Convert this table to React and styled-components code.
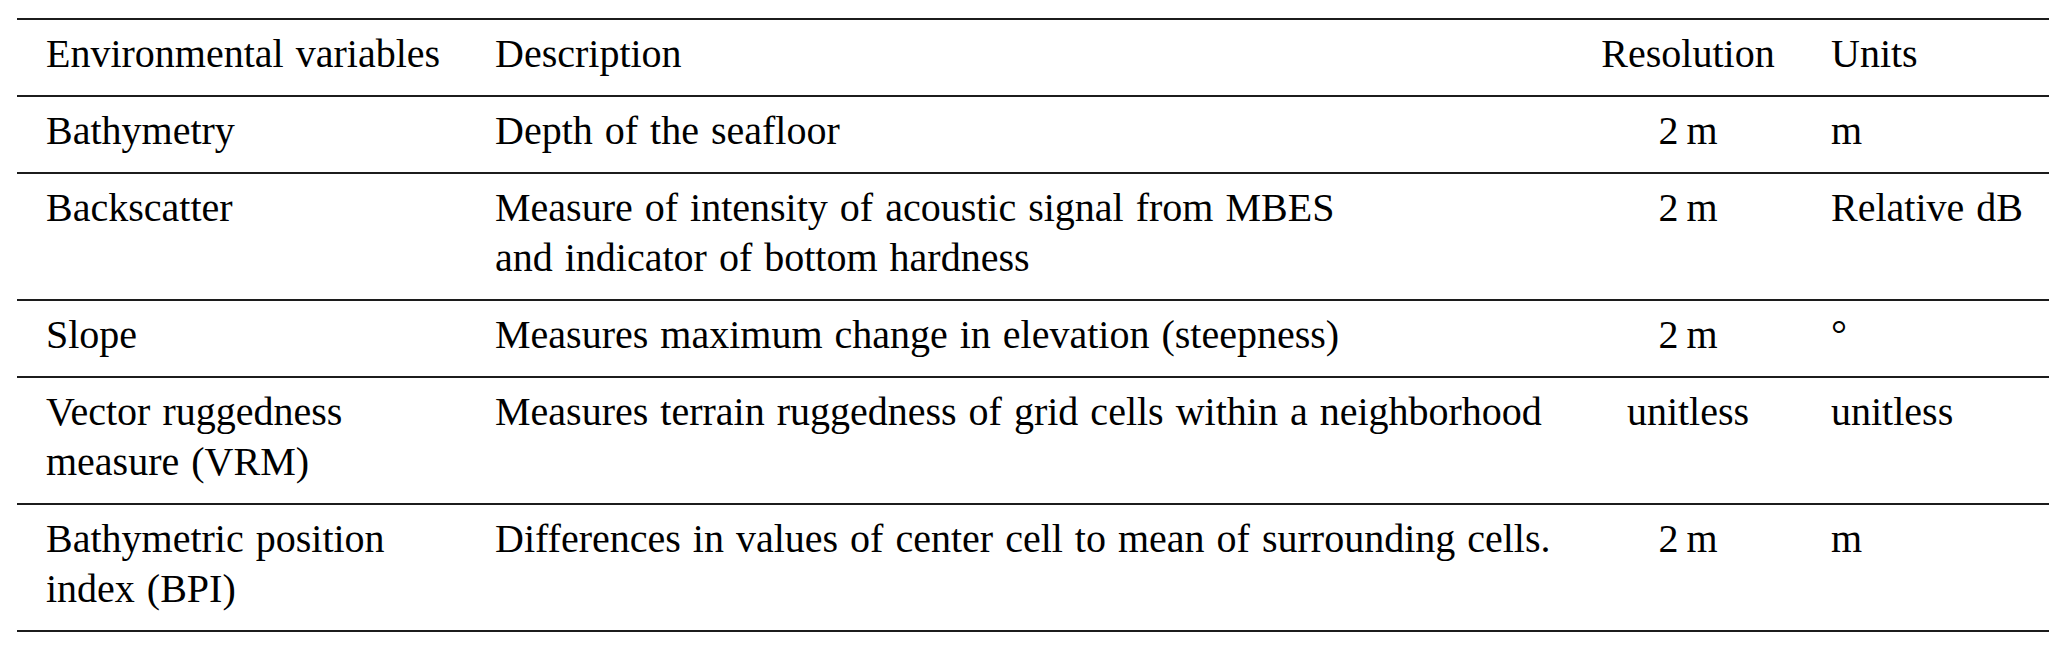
import React from "react";
import styled, { createGlobalStyle } from "styled-components";

const Global = createGlobalStyle`
  html, body { margin: 0; padding: 0; background: #ffffff; }
  body { font-family: 'Liberation Serif', 'Times New Roman', Times, serif; color: #000; }
`;

const Page = styled.div`
  padding: 18px 18px 0 17px;
  background: #ffffff;
`;

const Table = styled.table`
  width: 2032px;
  table-layout: fixed;
  border-collapse: separate;
  border-spacing: 0;
  color: #000;
`;

const Cell = styled.td`
  font-family: 'Liberation Serif', 'Times New Roman', Times, serif;
  font-size: 40px;
  line-height: 50px;
  font-weight: 400;
  word-spacing: 2px;
  vertical-align: top;
  border-top: 2px solid #1c1c1c;
  border-bottom: ${(p) => (p.$last ? "2px solid #1c1c1c" : "none")};
  padding: 9px 0 16px ${(p) => p.$pl || 0}px;
  text-align: ${(p) => p.$align || "left"};
  white-space: nowrap;
`;

const columns = [
  { width: 466, pl: 29, align: "left" },
  { width: 1095, pl: 12, align: "left" },
  { width: 220, pl: 0, align: "center" },
  { width: 251, pl: 33, align: "left" },
];

const rows = [
  [["Environmental variables"], ["Description"], ["Resolution"], ["Units"]],
  [["Bathymetry"], ["Depth of the seafloor"], ["2\u2009m"], ["m"]],
  [
    ["Backscatter"],
    ["Measure of intensity of acoustic signal from MBES", "and indicator of bottom hardness"],
    ["2\u2009m"],
    ["Relative dB"],
  ],
  [["Slope"], ["Measures maximum change in elevation (steepness)"], ["2\u2009m"], ["°"]],
  [
    ["Vector ruggedness", "measure (VRM)"],
    ["Measures terrain ruggedness of grid cells within a neighborhood"],
    ["unitless"],
    ["unitless"],
  ],
  [
    ["Bathymetric position", "index (BPI)"],
    ["Differences in values of center cell to mean of surrounding cells."],
    ["2\u2009m"],
    ["m"],
  ],
];

export default function App() {
  return (
    <>
      <Global />
      <Page>
        <Table>
          <colgroup>
            {columns.map((c, i) => (
              <col key={i} style={{ width: c.width }} />
            ))}
          </colgroup>
          <tbody>
            {rows.map((row, ri) => (
              <tr key={ri}>
                {row.map((lines, ci) => (
                  <Cell
                    key={ci}
                    as={ri === 0 ? "th" : "td"}
                    $pl={columns[ci].pl}
                    $align={columns[ci].align}
                    $last={ri === rows.length - 1}
                  >
                    {lines.map((l, li) => (
                      <React.Fragment key={li}>
                        {li > 0 && <br />}
                        {l}
                      </React.Fragment>
                    ))}
                  </Cell>
                ))}
              </tr>
            ))}
          </tbody>
        </Table>
      </Page>
    </>
  );
}
